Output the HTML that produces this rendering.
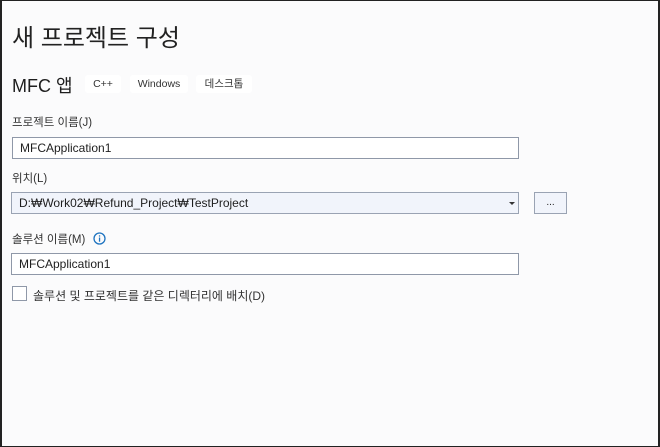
<!DOCTYPE html>
<html><head><meta charset="utf-8"><style>
*{margin:0;padding:0;box-sizing:border-box}
body{width:660px;height:447px;overflow:hidden;background:#fbfbfc;font-family:"Liberation Sans","Noto Sans CJK KR",sans-serif;color:#1e1e1e;position:relative}
.frame{position:absolute;left:0;top:0;width:660px;height:447px;border-left:2px solid #222;border-top:1px solid #222;border-right:2px solid #222;border-bottom:1px solid #222}
.a{position:absolute;white-space:nowrap}
.title{left:12px;top:18px;font-size:24px;color:#222}
.sub{left:12px;top:72px;font-size:18px}
.tag{top:75px;height:18px;background:#fff;border-radius:3px;font-size:10.5px;line-height:18px;text-align:center;color:#333}
.lbl{font-size:11.5px;color:#333}
.inp{height:22px;border:1px solid #8f98a8;background:#fff;font-size:12px;line-height:20px;padding-left:7px}
</style></head><body>
<div class="a title">새 프로젝트 구성</div>
<div class="a sub">MFC 앱</div>
<div class="a tag" style="left:85px;width:36px">C++</div>
<div class="a tag" style="left:130px;width:58px">Windows</div>
<div class="a tag" style="left:196px;width:56px">데스크톱</div>
<div class="a lbl" style="left:12px;top:114px">프로젝트 이름(J)</div>
<div class="a inp" style="left:12px;top:137px;width:507px">MFCApplication1</div>
<div class="a lbl" style="left:12px;top:170px">위치(L)</div>
<div class="a inp" style="left:11px;top:192px;width:508px;background:#f1f4fb;border-color:#9aa3b3">D:₩Work02₩Refund_Project₩TestProject
<span style="position:absolute;right:3px;top:9px;width:0;height:0;border-left:3px solid transparent;border-right:3px solid transparent;border-top:3px solid #333"></span></div>
<div class="a inp" style="left:534px;top:192px;width:33px;background:#f1f4fb;border-color:#9aa3b3;padding:0;text-align:center;font-size:10px;line-height:20px">...</div>
<div class="a lbl" style="left:12px;top:231px">솔루션 이름(M)</div>
<svg class="a" style="left:93px;top:232px" width="13" height="13" viewBox="0 0 13 13"><circle cx="6.5" cy="6.5" r="5.5" fill="none" stroke="#1f74c0" stroke-width="1.3"/><rect x="5.9" y="5.5" width="1.3" height="4.2" fill="#1f74c0"/><rect x="5.9" y="3.3" width="1.3" height="1.3" fill="#1f74c0"/></svg>
<div class="a inp" style="left:11px;top:253px;width:508px">MFCApplication1</div>
<div class="a" style="left:12px;top:286px;width:15px;height:15px;border:1px solid #8f98a8;background:#fff"></div>
<div class="a lbl" style="left:33px;top:287px;font-size:12px">솔루션 및 프로젝트를 같은 디렉터리에 배치(D)</div>
<div class="frame"></div>
</body></html>
